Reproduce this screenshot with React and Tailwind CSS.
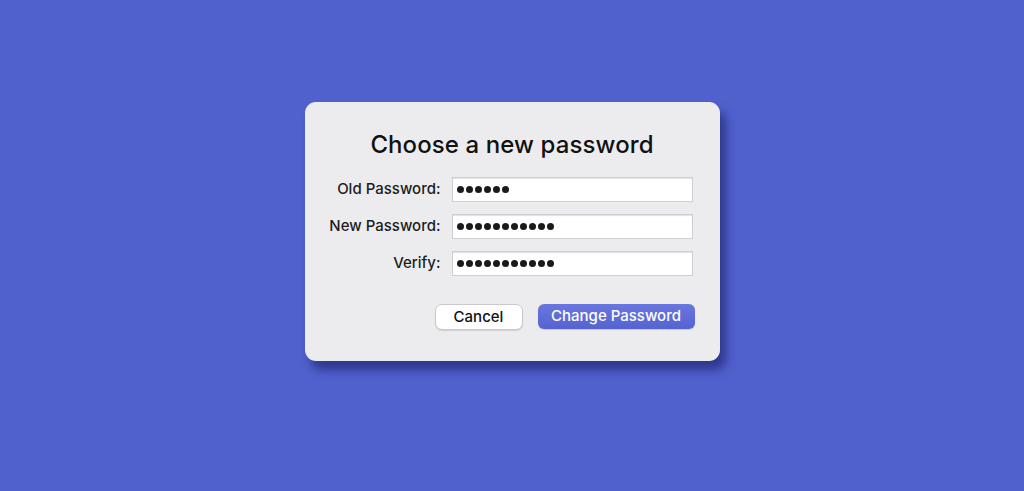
import React from "react";

const fields = [
  { label: "Old Password:", count: 6 },
  { label: "New Password:", count: 11 },
  { label: "Verify:", count: 11 },
];

function Dots({ count }) {
  return (
    <div className="flex items-center gap-[2px]">
      {Array.from({ length: count }).map((_, i) => (
        <span key={i} className="block w-[7px] h-[7px] rounded-full bg-[#1a1a1a]" />
      ))}
    </div>
  );
}

export default function App() {
  return (
    <div
      className="w-full h-[491px] bg-[#5060cd] flex justify-center pt-[102px]"
      style={{ fontFamily: "Inter, 'Open Sans', sans-serif" }}
    >
      <div className="w-[415px] h-[259px] bg-[#ececee] rounded-[11px] shadow-[6px_9px_10px_rgba(20,25,90,0.55)] flex flex-col">
        <h2 className="text-center text-[24px] font-medium text-[#111] mt-[27px] leading-[32px] tracking-[0.1px]">
          Choose a new password
        </h2>

        <div className="mt-[16px] flex flex-col gap-[12px] pr-[27px]">
          {fields.map((f) => (
            <div key={f.label} className="flex items-center">
              <label className="w-[147px] shrink-0 text-right text-[15px] font-medium text-[#1c1c1c] pr-[11px]">
                {f.label}
              </label>
              <div className="flex-1 h-[25px] bg-white border border-[#cfcfd3] shadow-[inset_0_1px_1px_rgba(0,0,0,0.12)] flex items-center pl-[4px]">
                <Dots count={f.count} />
              </div>
            </div>
          ))}
        </div>

        <div className="mt-[28px] flex justify-end gap-[15px] pr-[25px]">
          <button className="w-[88px] h-[26px] bg-white border border-[#c9c9cd] rounded-[7px] text-[15px] font-medium text-[#111] shadow-[0_1px_1px_rgba(0,0,0,0.12)]">
            Cancel
          </button>
          <button className="w-[157px] h-[25px] rounded-[6px] bg-gradient-to-b from-[#6a76df] to-[#5563d2] text-[15px] font-medium text-white shadow-[0_1px_1px_rgba(0,0,0,0.15)]">
            Change Password
          </button>
        </div>
      </div>
    </div>
  );
}
